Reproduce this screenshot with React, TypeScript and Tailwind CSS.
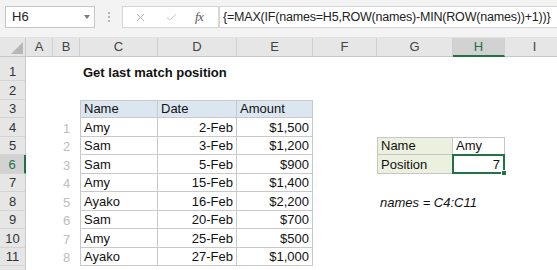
import { X, Check } from 'lucide-react';

const colW = ['w-[27px]', 'w-[27px]', 'w-[78px]', 'w-[79px]', 'w-[76px]', 'w-[64px]', 'w-[76px]', 'w-[52px]', 'w-[60px]'];
const letters = ['A', 'B', 'C', 'D', 'E', 'F', 'G', 'H', 'I'];

type Cell = { text?: string; cls?: string; sel?: boolean };

const data = [
  ['Amy', '2-Feb', '$1,500'],
  ['Sam', '3-Feb', '$1,200'],
  ['Sam', '5-Feb', '$900'],
  ['Amy', '15-Feb', '$1,400'],
  ['Ayako', '16-Feb', '$2,200'],
  ['Sam', '20-Feb', '$700'],
  ['Amy', '25-Feb', '$500'],
  ['Ayako', '27-Feb', '$1,000'],
];

const tb = 'border-r border-b border-[#c9c9c9]';
const lk = 'border-r border-b border-[#c6c6c6]';

function buildRows(): Record<number, Cell[]> {
  const rows: Record<number, Cell[]> = {};
  for (let r = 1; r <= 12; r++) rows[r] = letters.map(() => ({}));
  rows[1][2] = { text: 'Get last match position', cls: 'font-bold pl-[3px]' };
  rows[3][2] = { text: 'Name', cls: `${tb} border-l border-t bg-[#dce6f1] pl-[3px]` };
  rows[3][3] = { text: 'Date', cls: `${tb} border-t bg-[#dce6f1] pl-[3px]` };
  rows[3][4] = { text: 'Amount', cls: `${tb} border-t bg-[#dce6f1] pl-[3px]` };
  data.forEach((d, i) => {
    const r = i + 4;
    rows[r][1] = { text: String(i + 1), cls: 'justify-center text-[#bdbdbd]' };
    rows[r][2] = { text: d[0], cls: `${tb} border-l pl-[3px]` };
    rows[r][3] = { text: d[1], cls: `${tb} justify-end pr-[3px]` };
    rows[r][4] = { text: d[2], cls: `${tb} justify-end pr-[3px]` };
  });
  rows[5][6] = { text: 'Name', cls: `${lk} border-l border-t bg-[#ebf1de] pl-[3px]` };
  rows[5][7] = { text: 'Amy', cls: `${lk} border-t pl-[3px]` };
  rows[6][6] = { text: 'Position', cls: `${lk} border-l bg-[#ebf1de] pl-[3px]` };
  rows[6][7] = { text: '7', cls: `${lk} justify-end pr-[4px]`, sel: true };
  rows[8][6] = { text: 'names = C4:C11', cls: 'italic pl-[3px]' };
  return rows;
}

function FormulaBar() {
  return (
    <div className="h-[38px] bg-[#f3f3f3] flex items-start pt-[6px] border-b border-[#e2e2e2]">
      <div className="ml-[5px] w-[90px] h-[22px] bg-white border border-[#c6c6c6] flex items-center justify-between pl-[6px] pr-[4px]">
        <span className="text-[13px] text-[#222]">H6</span>
        <span className="w-0 h-0 border-l-[3.5px] border-r-[3.5px] border-t-[4px] border-l-transparent border-r-transparent border-t-[#7a7a7a]" />
      </div>
      <div className="w-[27px] h-[22px] flex flex-col items-center justify-center gap-[2px]">
        <span className="w-[2px] h-[2px] bg-[#b5b5b5]" />
        <span className="w-[2px] h-[2px] bg-[#b5b5b5]" />
        <span className="w-[2px] h-[2px] bg-[#b5b5b5]" />
      </div>
      <div className="w-[97px] h-[22px] bg-white border border-[#d6d6d6] flex items-center">
        <X size={13} strokeWidth={1.5} className="ml-[11px] text-[#a8a8a8]" />
        <Check size={13} strokeWidth={1.5} className="ml-[18px] text-[#b8b8b8]" />
        <span className="ml-[17px] text-[13px] italic text-[#555] font-['Liberation_Serif',serif] tracking-[-0.5px]">fx</span>
      </div>
      <div className="flex-1 h-[22px] bg-white border border-[#d6d6d6] border-r-0 flex items-center pl-[3px] overflow-hidden">
        <span className="text-[12.5px] tracking-[-0.2px] text-[#222] whitespace-nowrap">{'{=MAX(IF(names=H5,ROW(names)-MIN(ROW(names))+1))}'}</span>
      </div>
    </div>
  );
}

function HeaderRow() {
  return (
    <div className="flex h-[19px]">
      <div className="w-[26px] shrink-0 bg-[#e6e6e6] border-r border-b border-[#c8c8c8] flex items-end justify-end pr-[2px] pb-[2px]">
        <svg width="12" height="12" viewBox="0 0 12 12">
          <polygon points="12,0 12,12 0,12" fill="#b6b6b6" />
        </svg>
      </div>
      {letters.map((l, i) => (
        <div
          key={l}
          className={`${colW[i]} shrink-0 flex items-center justify-center text-[13px] border-r border-[#d0d0d0] ${
            l === 'H' ? 'bg-[#d2d2d2] text-[#217346] border-b-2 border-b-[#217346]' : 'bg-[#e6e6e6] text-[#444] border-b border-b-[#c8c8c8]'
          }`}
        >
          {l}
        </div>
      ))}
    </div>
  );
}

export default function App() {
  const rows = buildRows();
  return (
    <div className="w-[557px] h-[270px] overflow-hidden bg-white font-['Liberation_Sans',Arial,sans-serif] text-[13px] text-[#111]">
      <FormulaBar />
      <HeaderRow />
      {Object.keys(rows).map((k) => {
        const r = Number(k);
        return (
          <div key={r} className={`flex ${r === 1 ? 'h-[24px]' : 'h-[18.5px]'}`}>
            <div
              className={`w-[26px] shrink-0 flex items-end justify-center leading-[17px] border-b border-[#d4d4d4] ${
                r === 6 ? 'bg-[#d2d2d2] text-[#217346] border-r-2 border-r-[#217346]' : 'bg-[#e6e6e6] text-[#333] border-r border-r-[#c8c8c8]'
              }`}
            >
              {r < 12 ? r : ''}
            </div>
            {rows[r].map((c, i) => (
              <div key={i} className={`${colW[i]} shrink-0 relative flex items-end leading-[16px] whitespace-nowrap ${c.cls ?? ''}`}>
                {c.text}
                {c.sel && (
                  <div className="absolute left-[-1px] top-[-1px] right-[-1px] bottom-[-1px] border-2 border-[#217346]">
                    <span className="absolute right-[-4px] bottom-[-4px] w-[6px] h-[6px] bg-[#217346] border border-white" />
                  </div>
                )}
              </div>
            ))}
          </div>
        );
      })}
    </div>
  );
}
